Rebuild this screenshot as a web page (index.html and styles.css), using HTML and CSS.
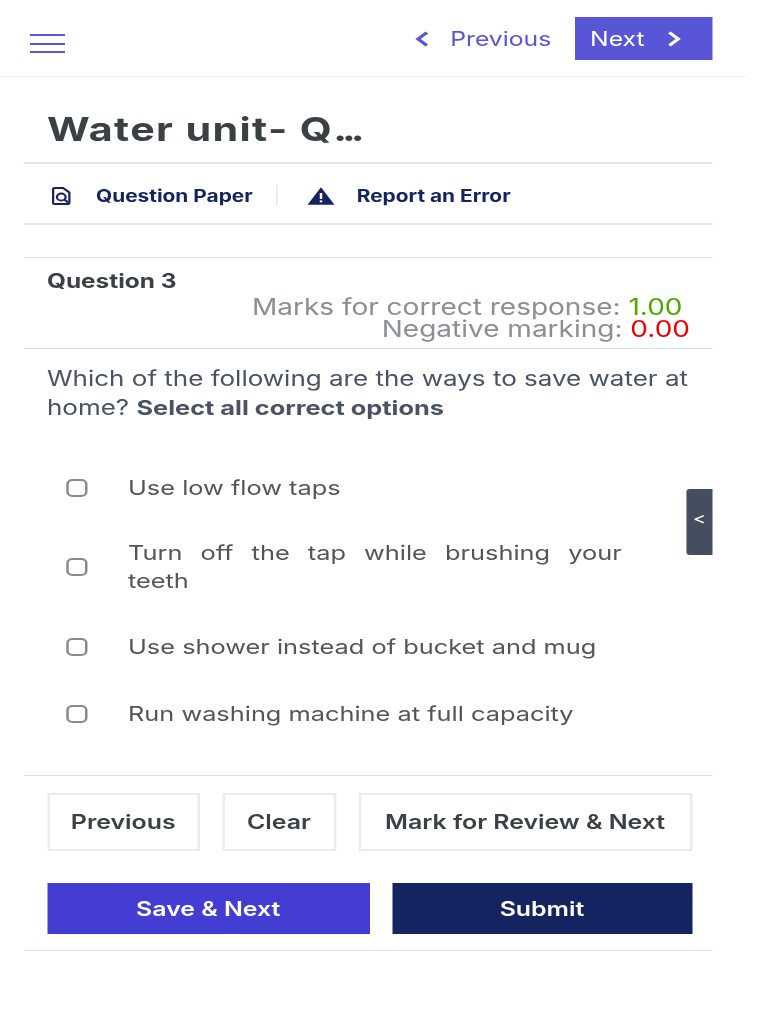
FILE: index.html
```html
<!DOCTYPE html>
<html lang="en">

<head>
    <meta charset="UTF-8">
    <meta name="viewport" content="width=device-width, initial-scale=1.0">
    <title>Water unit - Quiz</title>
    <link rel="stylesheet" href="styles.css">
</head>

<body>
    <div class="page">
        <div class="topbar">
            <div class="menu-icon"><span></span><span></span><span></span></div>
            <div class="topnav">
                <a class="prev-link" href="#">
                    <svg class="chevron" viewBox="0 0 11 16"><path d="M9.500 1.500 2.500 8l7 6.500" /></svg>
                    Previous
                </a>
                <a class="next-link" href="#">
                    Next
                    <svg class="chevron" viewBox="0 0 11 16"><path d="M1.500 1.500l7 6.500-7 6.500" /></svg>
                </a>
            </div>
        </div>

        <div class="content">
            <h1 class="title">Water unit- Q<span class="dots">...</span></h1>

            <div class="toolbar">
                <a class="tool tool-paper" href="#">
                    <svg class="tool-icon" viewBox="0 0 16 18">
                        <path d="M2.500 1h7l5 4.500v10.500a1 1 0 0 1-1 1h-11a1 1 0 0 1-1-1v-14a1 1 0 0 1 1-1z" />
                        <circle cx="8" cy="10" r="3.500" />
                        <path d="M10.500 12.500l3 3" />
                    </svg>
                    Question Paper
                </a>
                <a class="tool tool-error" href="#">
                    <svg class="tool-icon" viewBox="0 0 22 18">
                        <path class="solid" d="M11 0 22 18H0z" />
                        <rect class="mark" x="10" y="6" width="2" height="6" />
                        <rect class="mark" x="10" y="13.500" width="2" height="2" />
                    </svg>
                    Report an Error
                </a>
            </div>

            <div class="question-head">
                <h2>Question 3</h2>
                <div class="marks">
                    <div class="marks-correct">Marks for correct response: <span class="green">1.00</span></div>
                    <div>Negative marking: <span class="red">0.00</span></div>
                </div>
            </div>

            <p class="question-text">Which of the following are the ways to save water at home? <strong>Select all correct options</strong></p>

            <div class="options">
                <label class="option opt-1"><span class="checkbox"></span><span class="opt-text">Use low flow taps</span></label>
                <label class="option opt-2"><span class="checkbox"></span><span class="opt-text">Turn off the tap while brushing your teeth</span></label>
                <label class="option opt-3"><span class="checkbox"></span><span class="opt-text">Use shower instead of bucket and mug</span></label>
                <label class="option opt-4"><span class="checkbox"></span><span class="opt-text">Run washing machine at full capacity</span></label>
            </div>

            <div class="actions">
                <div class="action-row">
                    <button class="btn btn-prev">Previous</button>
                    <button class="btn btn-clear">Clear</button>
                    <button class="btn btn-mark">Mark for Review &amp; Next</button>
                </div>
                <div class="action-row action-main">
                    <button class="btn btn-save">Save &amp; Next</button>
                    <button class="btn btn-submit">Submit</button>
                </div>
            </div>

            <div class="side-tab">&lt;</div>
        </div>
    </div>
</body>

</html>
```

FILE: styles.css
```css
/* Reset */
body,
h1,
h2,
p {
    margin: 0;
    padding: 0;
}

body {
    background-color: #fff;
    font-family: 'Inter', 'Liberation Sans', sans-serif;
    overflow: hidden;
}

/* The whole screen is stretched sideways */
.page {
    width: 614.4px;
    height: 1024px;
    transform: scaleX(1.25);
    transform-origin: 0 0;
}

/* Top bar */
.topbar {
    width: 598px;
    height: 77px;
    box-sizing: border-box;
    border-bottom: 1px solid #f4f4f6;
    display: flex;
    justify-content: space-between;
    padding: 17px 28px 0 24px;
}

.menu-icon {
    width: 28px;
    display: flex;
    flex-direction: column;
    gap: 6.500px;
    padding-top: 17px;
}

.menu-icon span {
    height: 2px;
    background-color: #5856d6;
}

.topnav {
    display: flex;
    align-items: flex-start;
    gap: 19px;
}

.topnav a {
    text-decoration: none;
    font-size: 19.800px;
    font-weight: 400;
    display: flex;
    align-items: center;
    height: 43px;
    box-sizing: border-box;
}

.chevron {
    width: 11px;
    height: 16px;
    fill: none;
    stroke: currentColor;
    stroke-width: 3;
}

.prev-link {
    color: #5856d6;
    gap: 17.500px;
}

.next-link {
    color: #fff;
    background-color: #5856d6;
    width: 110px;
    padding-left: 12px;
    gap: 18px;
}

/* Content */
.content {
    position: relative;
    margin-left: 19.200px;
    width: 551.200px;
    color: #3a4145;
}

.title {
    height: 87px;
    box-sizing: border-box;
    padding: 32px 0 0 18.400px;
    font-size: 33px;
    line-height: 40px;
    font-weight: 700;
    letter-spacing: 1.100px;
    border-bottom: 2px solid #e6e6e6;
}

.dots {
    letter-spacing: -4px;
}

.toolbar {
    height: 61px;
    box-sizing: border-box;
    display: flex;
    align-items: center;
    border-bottom: 2px solid #e6e6e6;
    padding: 4px 0 0 21.600px;
}

.tool {
    display: flex;
    align-items: center;
    color: #14245f;
    text-decoration: none;
    font-size: 16.700px;
    font-weight: 700;
}

.tool-paper {
    gap: 20px;
    height: 21px;
    padding-right: 19px;
    border-right: 1px solid #e4e4e4;
}

.tool-error {
    gap: 17.600px;
    margin-left: 24px;
}

.tool-icon {
    width: 16px;
    height: 18px;
    fill: none;
    stroke: #14245f;
    stroke-width: 1.800;
}

.tool-error .tool-icon {
    width: 21.600px;
    height: 18px;
    stroke: none;
}

.tool-icon .solid {
    fill: #14245f;
}

.tool-icon .mark {
    fill: #fff;
}

/* Question */
.question-head {
    margin-top: 32px;
    height: 92px;
    box-sizing: border-box;
    border-top: 1px solid #e0e0e0;
    border-bottom: 1px solid #e0e0e0;
    padding: 12px 18.400px 0;
}

.question-head h2 {
    font-size: 19.500px;
    line-height: 22px;
    font-weight: 700;
}

.marks {
    text-align: right;
    color: #8a8f94;
    font-size: 22.400px;
    line-height: 22px;
    margin-top: 4px;
}

.marks-correct {
    padding-right: 6px;
}

.green {
    color: #4fa800;
}

.red {
    color: #ee0000;
}

.question-text {
    padding: 15px 16px 0 18.400px;
    font-size: 20.800px;
    line-height: 29px;
    color: #4a5366;
}

.question-text strong {
    font-size: 20.300px;
}

.options {
    margin-top: 52px;
    color: #555;
    font-size: 20.300px;
}

.option {
    display: flex;
    align-items: center;
    padding-left: 33.600px;
    line-height: 28px;
}

.opt-2 {
    margin-top: 37px;
}

.opt-3 {
    margin-top: 38px;
}

.opt-4 {
    margin-top: 39px;
}

.checkbox {
    flex: none;
    width: 17.600px;
    height: 18px;
    box-sizing: border-box;
    border: 2px solid #8a8a8a;
    border-radius: 5px;
    margin-right: 32px;
}

.opt-text {
    width: 395px;
    text-align: justify;
}

/* Buttons */
.actions {
    margin-top: 47px;
    border-top: 1px solid #e0e0e0;
    border-bottom: 1px solid #e0e0e0;
    padding: 17px 16.800px 16px 18.400px;
}

.action-row {
    display: flex;
    gap: 18px;
}

.action-main {
    margin-top: 32px;
}

.btn {
    font-family: inherit;
    font-size: 19.900px;
    font-weight: 600;
    color: #3a4145;
    background-color: #fff;
    border: 2px solid #ececec;
    height: 58px;
    padding: 0;
}

.btn-prev {
    width: 122px;
}

.btn-clear {
    width: 91px;
}

.btn-mark {
    width: 267px;
}

.action-main .btn {
    height: 51px;
    border: none;
    color: #fff;
}

.btn-save {
    width: 258px;
    background-color: #433dd4;
}

.btn-submit {
    width: 240px;
    background-color: #142460;
}

/* Side tab */
.side-tab {
    position: absolute;
    top: 412px;
    right: 0;
    width: 21.600px;
    height: 66px;
    box-sizing: border-box;
    padding-top: 19px;
    text-align: center;
    background-color: #454d60;
    color: #fff;
    font-size: 16px;
    line-height: 20px;
    border-radius: 3px 0 0 3px;
}
```
